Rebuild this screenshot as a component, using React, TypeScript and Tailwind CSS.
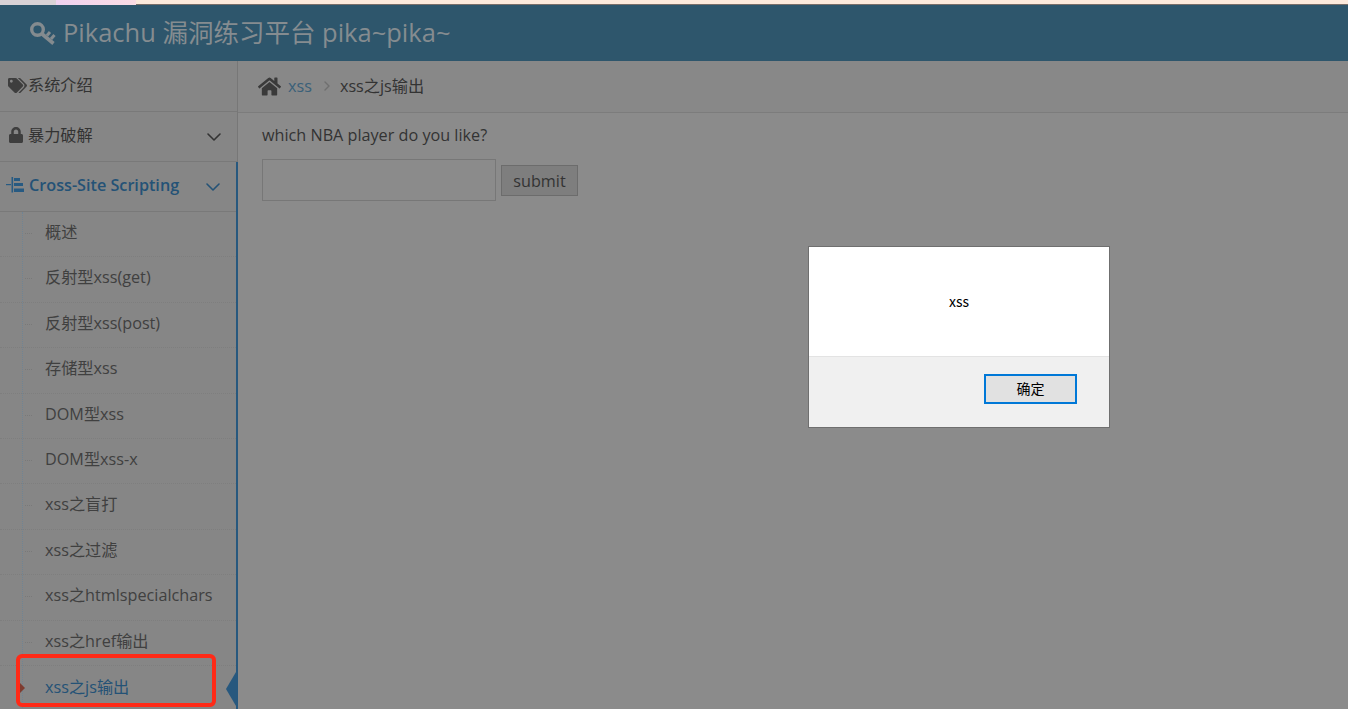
import { FaHome, FaLock, FaTags } from "react-icons/fa";
import { ChevronDown, ChevronRight } from "lucide-react";

const subItems = [
  "概述",
  "反射型xss(get)",
  "反射型xss(post)",
  "存储型xss",
  "DOM型xss",
  "DOM型xss-x",
  "xss之盲打",
  "xss之过滤",
  "xss之htmlspecialchars",
  "xss之href输出",
];

const KeyIcon = () => (
  <svg width="27" height="24" viewBox="0 0 27 24" fill="none" stroke="#848b8f">
    <circle cx="8.5" cy="8.5" r="5.8" strokeWidth="3.4" />
    <path d="M12.5 12.5 L24.5 22.5" strokeWidth="3.6" />
    <path d="M18 14.5 L21 11 M22 18 L25.5 14" strokeWidth="3" />
  </svg>
);

const TreeIcon = () => (
  <svg width="18" height="16" viewBox="0 0 18 16" fill="#275a82">
    <rect x="0" y="7" width="5" height="1.2" />
    <rect x="5.5" y="0" width="1.6" height="15.5" />
    <rect x="8" y="1" width="6" height="3" />
    <rect x="8" y="6" width="9" height="3" />
    <rect x="8" y="11.5" width="10" height="3.5" />
  </svg>
);

const App = () => {
  return (
    <div
      className="relative h-[709px] w-[1348px] overflow-hidden bg-[#8b8b8b] text-[16.2px] text-[#333333]"
      style={{ fontFamily: '"Open Sans", "Noto Sans CJK SC", sans-serif' }}
    >
      <div className="flex h-[5px]">
        <div className="w-[56px] bg-[#d9d2d6]" />
        <div className="w-[80px] bg-gradient-to-r from-[#efd2f0] to-[#fbdce4]" />
        <div className="flex-1 border-b border-[#7a6f6a] bg-[#fdeadc]" />
      </div>

      <header className="flex h-[56px] items-center bg-[#2e566c] pl-[29px] text-[25.5px] text-[#858c90]">
        <KeyIcon />
        <span className="ml-[7px] leading-none">Pikachu 漏洞练习平台 pika~pika~</span>
      </header>

      <div className="flex h-[648px]">
        <aside className="w-[238px] shrink-0 bg-[#868686]">
          <div className="h-[101px] border-r border-[#777777]">
            <div className="flex h-[51px] items-center border-b border-[#797979] pb-[2px] pl-[8px]">
              <FaTags className="text-[19px] text-[#3e3e3e]" />
              <span className="ml-[1px]">系统介绍</span>
            </div>
            <div className="flex h-[50px] items-center border-b border-[#797979] pb-[3px] pl-[8px] pr-[11px]">
              <FaLock className="text-[16px] text-[#3e3e3e]" />
              <span className="ml-[4px] flex-1">暴力破解</span>
              <ChevronDown size={24} strokeWidth={1.6} className="mt-[3px] text-[#333333]" />
            </div>
          </div>

          <div className="h-[547px] border-r-2 border-[#27587e]">
            <div className="flex h-[50px] items-center border-b border-[#797979] pb-[3px] pl-[6px] pr-[11px] font-semibold text-[#245276]">
              <TreeIcon />
              <span className="ml-[5px] flex-1 text-[16.2px]">Cross-Site Scripting</span>
              <ChevronDown size={24} strokeWidth={1.6} className="mt-[3px]" />
            </div>

            <div className="relative">
              <div className="absolute bottom-0 left-[22px] top-0 border-l border-dotted border-[#6f8494]" />
              {subItems.map((label) => (
                <div
                  key={label}
                  className="relative flex h-[45.4px] items-center border-b border-dotted border-[#7e7e7e] pb-[4px] pl-[45px] text-[#404040]"
                >
                  <span className="absolute left-[25px] top-[21px] w-[7px] border-t border-dotted border-[#797979]" />
                  {label}
                </div>
              ))}
              <div className="relative flex h-[50px] items-start pl-[45px] pt-[9px] text-[#245276]">
                <span className="absolute left-[20px] top-[17px] border-y-[5px] border-l-[5px] border-y-transparent border-l-[#7f3c30]" />
                xss之js输出
                <span className="absolute right-0 top-[6px] border-y-[17px] border-r-[10px] border-y-transparent border-r-[#27587e]" />
              </div>
            </div>
          </div>
        </aside>

        <main className="flex-1">
          <div className="flex h-[52px] items-center border-b border-[#7c7c7c] bg-[#888888] pb-[1px] pl-[20px]">
            <FaHome className="text-[23px] text-[#3a3a3a]" />
            <span className="ml-[7px] text-[#3a6079]">xss</span>
            <ChevronRight size={16} className="ml-[7px] text-[#6f6f6f]" />
            <span className="ml-[5px]">xss之js输出</span>
          </div>
          <div className="px-[24px] pt-[10px]">
            <p className="leading-[24px]">which NBA player do you like?</p>
            <form className="mt-[12px] flex items-center">
              <input className="h-[42px] w-[234px] border border-[#777777] bg-[#8b8b8b]" />
              <button
                type="button"
                className="ml-[5px] h-[31px] w-[77px] border border-[#6c6c6c] bg-[#7e7e7e] pt-[2px] text-[#333333]"
              >
                submit
              </button>
            </form>
          </div>
        </main>
      </div>

      {/* alert box */}
      <div
        className="absolute left-[808px] top-[246px] flex h-[182px] w-[302px] flex-col border border-[#6f6f6f] bg-white text-[14px] text-black"
        style={{ fontFamily: '"Noto Sans CJK SC", "Liberation Sans", sans-serif' }}
      >
        <div className="flex h-[109px] items-center justify-center">xss</div>
        <div className="flex flex-1 items-start justify-end border-t border-[#e3e3e3] bg-[#f0f0f0] pr-[32px] pt-[17px]">
          <button type="button" className="h-[30px] w-[93px] border-2 border-[#0078d7] bg-[#e1e1e1] pb-[2px] text-[14px] leading-none">
            确定
          </button>
        </div>
      </div>

      {/* red annotation */}
      <div className="absolute left-[16px] top-[654px] h-[53px] w-[200px] rounded-[6px] border-[4px] border-[#ff2a17]" />
    </div>
  );
};

export default App;
